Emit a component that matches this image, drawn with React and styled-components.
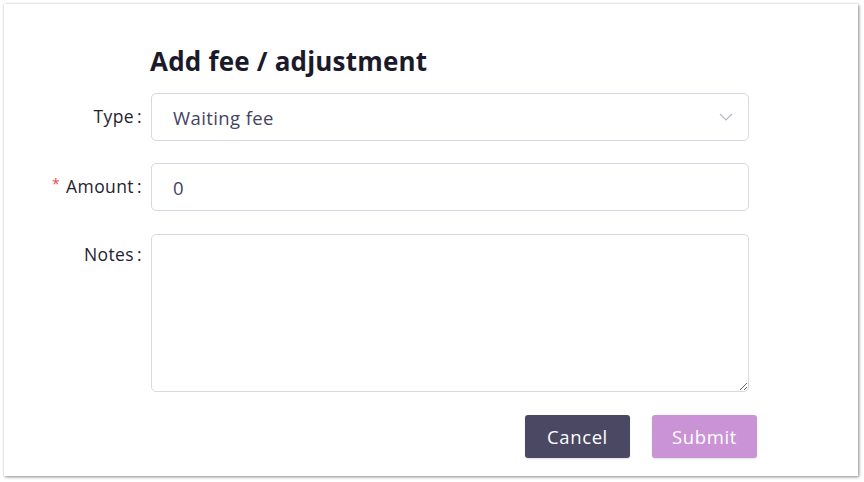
import React from "react";
import styled, { createGlobalStyle } from "styled-components";

const Global = createGlobalStyle`
  html, body { margin: 0; padding: 0; background: #ffffff; }
  body { font-family: "Open Sans", "DejaVu Sans", sans-serif; }
  * { box-sizing: border-box; }
`;

const Page = styled.div`
  padding: 4px 6px 6px 4px;
  width: 864px;
  height: 482px;
`;

const Card = styled.div`
  width: 854px;
  height: 472px;
  background: #fff;
  box-shadow: 1px 1px 3px rgba(0, 0, 0, 0.45), 0 0 2px rgba(0, 0, 0, 0.08);
  display: flex;
  flex-direction: column;
`;

const Form = styled.div`
  display: grid;
  grid-template-columns: 147px 598px;
  row-gap: 22px;
  padding-top: 40px;
`;

const Title = styled.h2`
  grid-column: 2;
  margin: 0 0 -7px -1px;
  font-family: "Open Sans", sans-serif;
  font-weight: 700;
  font-size: 26px;
  line-height: 34px;
  color: #1b1a2b;
  letter-spacing: 0.2px;
`;

const Label = styled.label`
  display: flex;
  justify-content: flex-end;
  align-items: ${(p) => (p.$top ? "flex-start" : "center")};
  padding-top: ${(p) => (p.$top ? "9px" : "0")};
  padding-right: 9px;
  height: ${(p) => (p.$top ? "auto" : "46px")};
  font-size: 17.5px;
  letter-spacing: 0.4px;
  color: #24232f;
  white-space: nowrap;
`;

const Req = styled.span`
  color: #e5484d;
  font-size: 14px;
  margin-right: 6px;
  margin-top: -6px;
`;

const Colon = styled.span`
  margin-left: 3px;
`;

const Field = styled.div`
  position: relative;
  height: 48px;
  border: 1px solid #d9d8e2;
  border-radius: 5px;
  background: #fff;
  display: flex;
  align-items: center;
  padding: 0 15px 0 21px;
  font-size: 18.5px;
  letter-spacing: 0.4px;
  color: #454362;
`;

const Input = styled.input`
  border: 0;
  outline: none;
  width: 100%;
  font: inherit;
  letter-spacing: inherit;
  color: inherit;
  padding: 0;
  background: transparent;
`;

const Chevron = styled.svg`
  margin-left: auto;
  width: 14px;
  height: 8px;
`;

const TextArea = styled.textarea`
  width: 598px;
  height: 158px;
  margin-top: 1px;
  border: 1px solid #d9d8e2;
  border-radius: 5px;
  font: inherit;
  font-size: 18px;
  padding: 10px 20px;
  resize: vertical;
  display: block;
  outline: none;
`;

const Footer = styled.div`
  display: flex;
  justify-content: flex-end;
  gap: 22px;
  padding-right: 101px;
  margin-top: 23px;
`;

const Button = styled.button`
  width: 105px;
  height: 43px;
  border: 0;
  border-radius: 3px;
  background: ${(p) => (p.$primary ? "#c993d6" : "#4a4863")};
  color: #fff;
  font-family: "Open Sans", sans-serif;
  font-size: 18.5px;
  letter-spacing: 0.6px;
  box-shadow: 0 1px 2px rgba(0, 0, 0, 0.12);
  cursor: pointer;
`;

export default function App() {
  return (
    <Page>
      <Global />
      <Card>
        <Form>
          <div />
          <Title>Add fee / adjustment</Title>
          <Label>
            Type<Colon>:</Colon>
          </Label>
          <Field>
            Waiting fee
            <Chevron viewBox="0 0 14 8" fill="none">
              <path d="M1 1 L7 7 L13 1" stroke="#b9b8c4" strokeWidth="1.2" />
            </Chevron>
          </Field>
          <Label>
            <Req>*</Req>Amount<Colon>:</Colon>
          </Label>
          <Field>
            <Input defaultValue="0" />
          </Field>
          <Label $top>
            Notes<Colon>:</Colon>
          </Label>
          <TextArea />
        </Form>
        <Footer>
          <Button>Cancel</Button>
          <Button $primary>Submit</Button>
        </Footer>
      </Card>
    </Page>
  );
}
